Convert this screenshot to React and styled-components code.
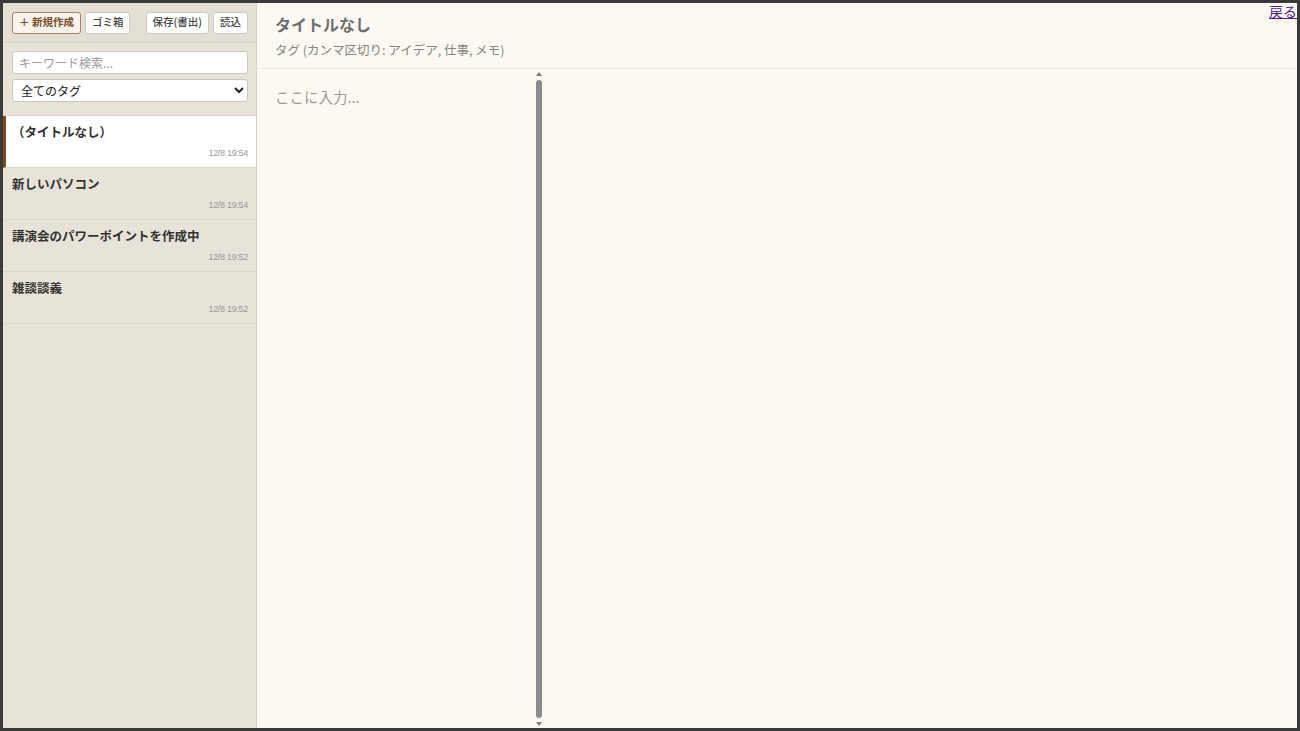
import React, { useState } from "react";
import styled, { createGlobalStyle } from "styled-components";

const GlobalStyle = createGlobalStyle`
  html, body {
    margin: 0;
    padding: 0;
    height: 100%;
  }
  body {
    font-family: "Noto Sans CJK JP", "Noto Sans", sans-serif;
    background: #3a3a3a;
  }
  * {
    box-sizing: border-box;
  }
`;

const notes = [
  { id: 1, title: "（タイトルなし）", date: "12/8 19:54" },
  { id: 2, title: "新しいパソコン", date: "12/8 19:54" },
  { id: 3, title: "講演会のパワーポイントを作成中", date: "12/8 19:52" },
  { id: 4, title: "雑談談義", date: "12/8 19:52" },
];

const App = () => {
  const [activeId, setActiveId] = useState(1);

  return (
    <>
      <GlobalStyle />
      <Frame>
        <Sidebar>
          <Toolbar>
            <ButtonGroup>
              <ToolButton $primary>＋ 新規作成</ToolButton>
              <ToolButton>ゴミ箱</ToolButton>
            </ButtonGroup>
            <ButtonGroup>
              <ToolButton>保存(書出)</ToolButton>
              <ToolButton>読込</ToolButton>
            </ButtonGroup>
          </Toolbar>
          <SearchArea>
            <SearchInput placeholder="キーワード検索..." />
            <TagSelect defaultValue="all">
              <option value="all">全てのタグ</option>
            </TagSelect>
          </SearchArea>
          <NoteList>
            {notes.map((note) => (
              <NoteItem
                key={note.id}
                $active={note.id === activeId}
                onClick={() => setActiveId(note.id)}
              >
                <NoteTitle>{note.title}</NoteTitle>
                <NoteDate>{note.date}</NoteDate>
              </NoteItem>
            ))}
          </NoteList>
        </Sidebar>
        <Editor>
          <EditorHeader>
            <TitleInput placeholder="タイトルなし" />
            <TagInput placeholder="タグ (カンマ区切り: アイデア, 仕事, メモ)" />
          </EditorHeader>
          <BodyWrap>
            <Body placeholder="ここに入力..." />
            {/* headless screenshots hide native scrollbars, so draw one */}
            <FakeScrollbar aria-hidden="true">
              <ScrollArrow viewBox="0 0 8 6">
                <path d="M4 1 L7 5 L1 5 Z" />
              </ScrollArrow>
              <ScrollThumb />
              <ScrollArrow viewBox="0 0 8 6">
                <path d="M4 5 L7 1 L1 1 Z" />
              </ScrollArrow>
            </FakeScrollbar>
          </BodyWrap>
        </Editor>
        <BackLink href="#">戻る</BackLink>
      </Frame>
    </>
  );
};

export default App;

const Frame = styled.div`
  position: relative;
  display: flex;
  height: 100vh;
  border: 3px solid #3a3a3a;
  background: #fcf9f3;
  overflow: hidden;
`;

const Sidebar = styled.aside`
  width: 254px;
  flex-shrink: 0;
  display: flex;
  flex-direction: column;
  background: #e7e3d9;
  border-right: 1px solid #d8d3c7;
`;

const Toolbar = styled.div`
  display: flex;
  justify-content: space-between;
  align-items: center;
  height: 40px;
  padding: 0 8px 0 9px;
  background: #e3dfd5;
  border-bottom: 1px solid #d6d1c5;
`;

const ButtonGroup = styled.div`
  display: flex;
  gap: 4px;
`;

const ToolButton = styled.button`
  height: 22px;
  padding: 0 6px;
  font-family: "Noto Sans CJK JP", sans-serif;
  font-size: 10.5px;
  font-weight: ${(p) => (p.$primary ? 700 : 500)};
  line-height: 1;
  border-radius: 3px;
  cursor: pointer;
  color: ${(p) => (p.$primary ? "#7a4f2c" : "#444")};
  background: ${(p) => (p.$primary ? "#f8f3ec" : "#ffffff")};
  border: 1px solid ${(p) => (p.$primary ? "#a98462" : "#cfcac0")};
`;

const SearchArea = styled.div`
  display: flex;
  flex-direction: column;
  gap: 5px;
  padding: 8px 8px 13px 9px;
  border-bottom: 1px solid #dcd7cb;
`;

const SearchInput = styled.input`
  height: 23px;
  padding: 0 6px;
  font-family: "Noto Sans CJK JP", sans-serif;
  font-size: 12px;
  color: #333;
  background: #fff;
  border: 1px solid #cdc8be;
  border-radius: 3px;
  outline: none;
  &::placeholder {
    color: #9a9a9a;
  }
`;

const TagSelect = styled.select`
  height: 23px;
  padding: 0 4px;
  font-family: "Noto Sans CJK JP", sans-serif;
  font-size: 12px;
  color: #222;
  background: #fff;
  border: 1px solid #cdc8be;
  border-radius: 3px;
`;

const NoteList = styled.div`
  display: flex;
  flex-direction: column;
`;

const NoteItem = styled.div`
  display: flex;
  flex-direction: column;
  height: 52px;
  padding: 7px 8px 0 ${(p) => (p.$active ? "6px" : "9px")};
  background: ${(p) => (p.$active ? "#ffffff" : "transparent")};
  border-left: ${(p) => (p.$active ? "3px solid #7b4a22" : "none")};
  border-bottom: 1px solid #dcd7cb;
  cursor: pointer;
`;

const NoteTitle = styled.div`
  font-size: 12.5px;
  font-weight: 700;
  color: #333;
  line-height: 18px;
  white-space: nowrap;
  overflow: hidden;
  text-overflow: ellipsis;
`;

const NoteDate = styled.div`
  margin-top: 7px;
  align-self: flex-end;
  font-family: "Liberation Sans", sans-serif;
  font-size: 9px;
  letter-spacing: -0.3px;
  color: #999;
`;

const Editor = styled.main`
  flex: 1;
  display: flex;
  flex-direction: column;
  min-width: 0;
`;

const EditorHeader = styled.div`
  display: flex;
  flex-direction: column;
  padding: 7px 18px 8px;
  border-bottom: 1px solid #ebe6dc;
`;

const TitleInput = styled.input`
  height: 28px;
  padding: 0;
  border: none;
  outline: none;
  background: transparent;
  font-family: "Noto Sans CJK JP", sans-serif;
  font-size: 16px;
  font-weight: 700;
  color: #333;
  &::placeholder {
    color: #6e6e6e;
  }
`;

const TagInput = styled.input`
  height: 22px;
  padding: 0;
  border: none;
  outline: none;
  background: transparent;
  font-family: "Noto Sans CJK JP", sans-serif;
  font-size: 12.5px;
  color: #333;
  &::placeholder {
    color: #868686;
  }
`;

const BodyWrap = styled.div`
  position: relative;
  flex: 1;
  display: flex;
  width: 290px;
`;

const Body = styled.textarea`
  flex: 1;
  padding: 16px 28px 16px 18px;
  border: none;
  outline: none;
  resize: none;
  background: transparent;
  font-family: "Noto Sans CJK JP", sans-serif;
  font-size: 14.5px;
  line-height: 1.6;
  color: #333;
  &::placeholder {
    color: #999;
  }
`;

const FakeScrollbar = styled.div`
  position: absolute;
  top: 2px;
  bottom: 1px;
  right: 4px;
  width: 8px;
  display: flex;
  flex-direction: column;
  align-items: center;
  gap: 3px;
  pointer-events: none;
`;

const ScrollArrow = styled.svg`
  width: 8px;
  height: 6px;
  flex-shrink: 0;
  fill: #7a7a7a;
`;

const ScrollThumb = styled.div`
  flex: 1;
  width: 6px;
  border-radius: 3px;
  background: #8c8c8c;
`;

const BackLink = styled.a`
  position: absolute;
  top: 0;
  right: 0;
  font-family: "Noto Sans CJK JP", sans-serif;
  font-size: 14px;
  line-height: 17px;
  color: #551a8b;
  text-decoration: underline;
`;
